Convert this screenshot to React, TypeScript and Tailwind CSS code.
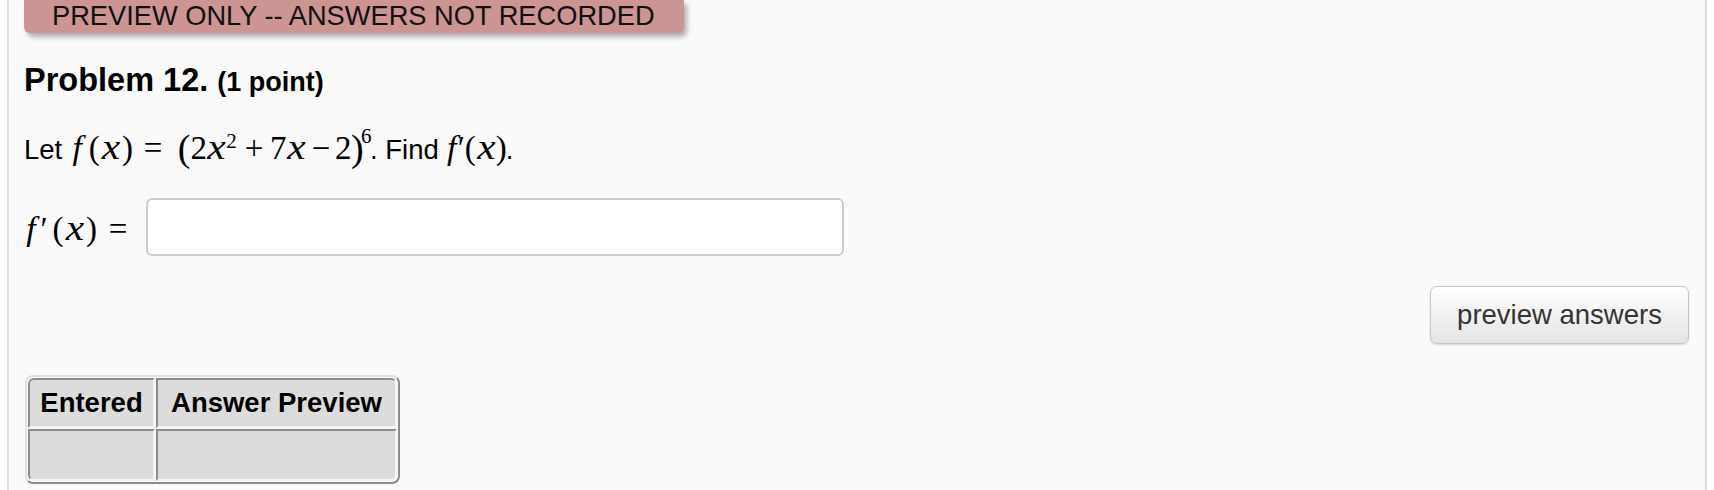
const mi =
  "inline-block text-center font-['Liberation_Serif','Times_New_Roman',serif] italic text-[34px] leading-[40px]";
const mx =
  "inline-block text-center font-['Liberation_Serif','Times_New_Roman',serif] italic text-[36px] leading-[40px] scale-x-[1.15]";
const mn =
  "inline-block text-center font-['Liberation_Serif','Times_New_Roman',serif] not-italic text-[33px] leading-[40px]";
const big =
  "inline-block text-center font-['Liberation_Serif','Times_New_Roman',serif] not-italic text-[38px] leading-[34px] translate-y-[2px]";
const sup =
  "inline-block text-center font-['Liberation_Serif','Times_New_Roman',serif] not-italic text-[21px] leading-[22px]";

const cellBase =
  "bg-[#dcdcdc] border-2 border-t-[#8c8c8c] border-l-[#8c8c8c] border-r-[#f4f4f4] border-b-[#f4f4f4] text-center align-middle p-0";

export default function App() {
  return (
    <div className="w-[1714px] h-[490px] overflow-hidden bg-white">
      <div className="ml-[7px] w-[1700px] h-[490px] border-x-2 border-[#dddddd] bg-[#fafafa] pl-[15px] pr-[16px] font-['Liberation_Sans',Arial,sans-serif] text-black">
        {/* banner */}
        <div className="w-fit bg-[#cd9494] rounded-b-[6px] pl-[28px] pr-[29px] pb-[2px] text-[27.25px] leading-[31px] text-[#111] shadow-[3px_4px_5px_rgba(0,0,0,0.3)]">
          PREVIEW ONLY -- ANSWERS NOT RECORDED
        </div>

        {/* heading */}
        <div className="mt-[29px] text-[32.5px] leading-[36px] font-bold">
          Problem 12. <span className="text-[27px]">(1 point)</span>
        </div>

        {/* problem statement */}
        <div className="mt-[27px] flex items-baseline h-[40px] leading-[40px] text-[27.5px]">
          <span>Let</span>
          <span className={`${mi} ml-[8px] w-[14px]`}>f</span>
          <span className={`${mn} ml-[4px] w-[12px]`}>(</span>
          <span className={`${mx} ml-[0.3px] w-[20px]`}>x</span>
          <span className={`${mn} ml-[1px] w-[12px]`}>)</span>
          <span className={`${mn} ml-[9px] w-[21px]`}>=</span>
          <span className={`${big} ml-[14px] w-[13px]`}>(</span>
          <span className={`${mn} w-[16px]`}>2</span>
          <span className={`${mx} w-[19px]`}>x</span>
          <span className={`${sup} ml-[0.5px] w-[11px] -translate-y-[11px]`}>2</span>
          <span className={`${mn} ml-[7px] w-[20px]`}>+</span>
          <span className={`${mn} ml-[6px] w-[16px]`}>7</span>
          <span className={`${mx} ml-[1px] w-[19px]`}>x</span>
          <span className={`${mn} ml-[5px] w-[20px]`}>−</span>
          <span className={`${mn} ml-[4px] w-[16px]`}>2</span>
          <span className={`${big} w-[10px]`}>)</span>
          <span className={`${sup} w-[10px] -translate-y-[16px]`}>6</span>
          <span className="ml-[-1px] whitespace-pre">. Find</span>
          <span className={`${mi} ml-[7px] w-[12px]`}>f</span>
          <span className={`${mn} w-[7px]`}>′</span>
          <span className={`${mn} w-[11px]`}>(</span>
          <span className={`${mx} ml-[1px] w-[19px]`}>x</span>
          <span className={`${mn} w-[10px]`}>)</span>
          <span>.</span>
        </div>

        {/* answer row */}
        <div className="mt-[31px] flex items-center h-[58px]">
          <div className="flex items-baseline h-[40px] translate-y-[1px] ml-[-2px]">
            <span className={`${mi} w-[18px]`}>f</span>
            <span className={`${mn} w-[8px]`}>′</span>
            <span className={`${mn} ml-[4px] w-[12px]`}>(</span>
            <span className={`${mx} w-[22px]`}>x</span>
            <span className={`${mn} w-[9px]`}>)</span>
            <span className={`${mn} ml-[11px] w-[24px]`}>=</span>
          </div>
          <input
            type="text"
            aria-label="answer"
            className="ml-[16px] w-[698px] h-[58px] bg-white border-2 border-[#cccccc] rounded-[6px] outline-none px-2 text-[27.5px]"
          />
        </div>

        {/* preview button */}
        <div className="mt-[30px] flex justify-end">
          <button
            type="button"
            className="w-[259px] h-[58px] rounded-[7px] border border-[#c6c6c6] bg-linear-to-b from-white to-[#e4e4e4] text-[#333] text-[27.5px] leading-none shadow-[0_1px_2px_rgba(0,0,0,0.15)]"
          >
            preview answers
          </button>
        </div>

        {/* results table */}
        <table className="mt-[31px] ml-[1px] border-separate border-spacing-[1px] border-2 border-t-[#e2e2e2] border-l-[#e2e2e2] border-r-[#8c8c8c] border-b-[#8c8c8c] rounded-[8px] text-[27.5px] font-bold">
          <thead>
            <tr>
              <th className={`${cellBase} w-[127px] h-[50px] rounded-tl-[6px]`}>Entered</th>
              <th className={`${cellBase} w-[241px] h-[50px] rounded-tr-[6px]`}>Answer Preview</th>
            </tr>
          </thead>
          <tbody>
            <tr>
              <td className={`${cellBase} h-[52px] rounded-bl-[6px]`}></td>
              <td className={`${cellBase} h-[52px] rounded-br-[6px]`}></td>
            </tr>
          </tbody>
        </table>
      </div>
    </div>
  );
}
